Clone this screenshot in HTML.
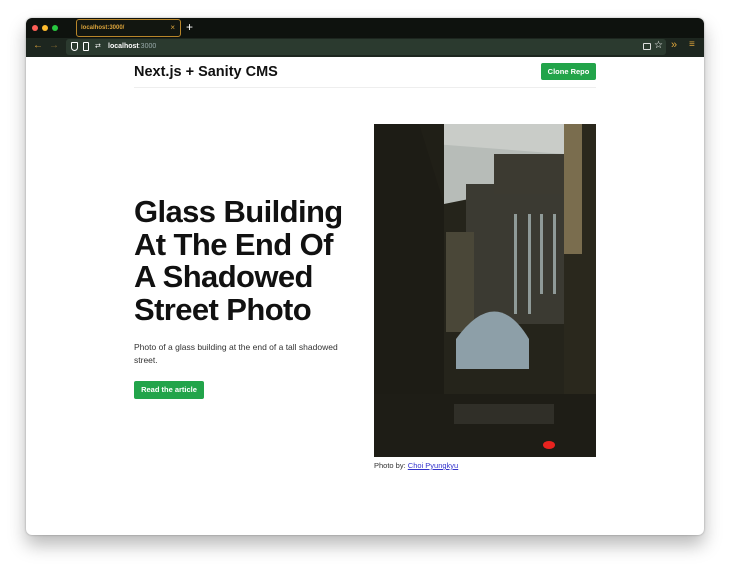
<!DOCTYPE html>
<html><head><style>
*{margin:0;padding:0;box-sizing:border-box}
body{width:730px;height:570px;background:#fff;font-family:"Liberation Sans",sans-serif;position:relative;overflow:hidden}
.win{position:absolute;left:26px;top:18px;width:678px;height:517px;border-radius:6px;overflow:hidden;background:#fff;box-shadow:0 10px 18px rgba(0,0,0,.28),0 0 2px rgba(0,0,0,.3)}
.tabs{position:absolute;left:0;top:0;width:678px;height:20px;background:#0e120e}
.dot{position:absolute;top:7px;width:6px;height:6px;border-radius:50%}
.tab{position:absolute;left:50px;top:1px;width:105px;height:18px;border:1px solid #b8862a;border-radius:3px;background:#121610;color:#d9a23a;font-size:6px;font-weight:bold;padding:5px 0 0 4px}
.tb{position:absolute;left:0;top:20px;width:678px;height:19px;background:#1d261f}
.url{position:absolute;left:40px;top:1px;width:600px;height:16px;background:#2b3a2f;border-radius:3px;color:#fff;font-size:7px;padding:4px 0 0 42px}
.c{position:absolute;color:#111}
.btn{position:absolute;background:#22a44a;color:#fff;font-weight:bold;border-radius:2px;text-align:center}
</style></head><body>
<div class="win">
 <div class="tabs">
  <div class="dot" style="left:6px;background:#fe5f57"></div>
  <div class="dot" style="left:16px;background:#febc2e"></div>
  <div class="dot" style="left:26px;background:#28c840"></div>
  <div class="tab">localhost:3000/<span style="position:absolute;right:5px;top:3px;font-size:8px;font-weight:normal">×</span></div>
  <div style="position:absolute;left:160px;top:2px;color:#fff;font-size:12px">+</div>
 </div>
 <div class="tb">
  <div style="position:absolute;left:7px;top:2px;color:#d9a23a;font-size:10px">←</div>
  <div style="position:absolute;left:23px;top:2px;color:#7a6430;font-size:10px">→</div>
  <div class="url">
   <span style="position:absolute;left:5px;top:3px;width:7px;height:9px;border:1px solid #fff;border-radius:1px 1px 4px 4px"></span>
   <span style="position:absolute;left:17px;top:3px;width:6px;height:9px;border:1px solid #fff;border-radius:1px"></span>
   <span style="position:absolute;left:29px;top:3px;font-size:7px">⇄</span>
   <b>localhost</b><span style="color:#9aa">:3000</span>
   <span style="position:absolute;right:15px;top:4px;width:8px;height:7px;border:1px solid #ddd;border-radius:1px"></span>
   <span style="position:absolute;right:3px;top:1px;font-size:10px">☆</span>
  </div>
  <div style="position:absolute;left:645px;top:1px;color:#d9a23a;font-size:11px">»</div>
  <div style="position:absolute;left:663px;top:1px;color:#d9a23a;font-size:10px">≡</div>
 </div>
</div>
<div class="c" style="left:134px;top:64px;font-size:14.5px;font-weight:bold">Next.js + Sanity CMS</div>
<div class="btn" style="left:541px;top:63px;width:55px;height:17px;font-size:7.5px;line-height:17px">Clone Repo</div>
<div style="position:absolute;left:134px;top:87px;width:462px;height:1px;background:#eee"></div>
<div class="c" style="left:134px;top:196px;font-size:31px;font-weight:bold;line-height:32.5px;letter-spacing:-0.6px;width:215px">Glass Building At The End Of A Shadowed Street Photo</div>
<div class="c" style="left:134px;top:341px;font-size:8.5px;line-height:13px;color:#333;width:220px">Photo of a glass building at the end of a tall shadowed street.</div>
<div class="btn" style="left:134px;top:381px;width:70px;height:18px;font-size:7.5px;line-height:18px">Read the article</div>
<svg style="position:absolute;left:374px;top:124px" width="222" height="333" viewBox="0 0 222 333">
 <rect width="222" height="333" fill="#25241b"/>
 <polygon points="45,0 190,0 190,60 110,60 95,75 70,80" fill="#b7bcb8"/>
 <polygon points="60,0 190,0 190,30 60,20" fill="#c9ccc8"/>
 <rect x="92" y="60" width="98" height="140" fill="#3b3a32"/>
 <rect x="120" y="30" width="72" height="40" fill="#3c3a31"/>
 <rect x="72" y="108" width="28" height="100" fill="#4a4738"/>
 <g fill="#8f9a98"><rect x="140" y="90" width="3" height="100"/><rect x="154" y="90" width="3" height="100"/><rect x="166" y="90" width="3" height="80"/><rect x="179" y="90" width="3" height="80"/></g>
 <path d="M82,215 Q122,160 155,215 L155,245 L82,245Z" fill="#8d9fa8"/>
 <rect x="0" y="0" width="70" height="333" fill="#201f17"/>
 <polygon points="0,0 45,0 70,80 70,333 0,333" fill="#1d1c15"/>
 <rect x="190" y="0" width="32" height="333" fill="#2a281d"/>
 <rect x="190" y="0" width="18" height="130" fill="#7a6d4e"/>
 <rect x="0" y="270" width="222" height="63" fill="#1e1d16"/>
 <rect x="80" y="280" width="100" height="20" fill="#302f28"/>
 <ellipse cx="175" cy="321" rx="6" ry="4" fill="#e8231f"/>
</svg>
<div class="c" style="left:374px;top:461px;font-size:7.5px;color:#333">Photo by: <span style="color:#33c;text-decoration:underline">Choi Pyungkyu</span></div>
</body></html>
